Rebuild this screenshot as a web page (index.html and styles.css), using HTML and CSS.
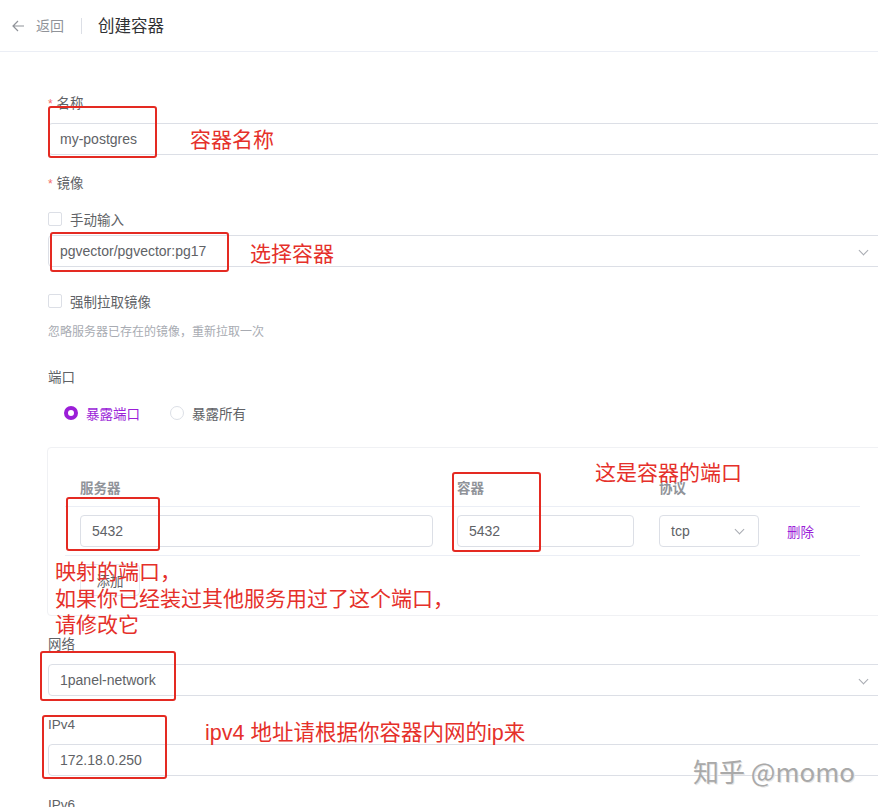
FILE: index.html
```html
<!DOCTYPE html>
<html lang="zh">
<head>
<meta charset="utf-8">
<title>创建容器</title>
<link rel="stylesheet" href="styles.css">
</head>
<body>
<div class="page">
  <header class="topbar">
    <span class="back-arrow">
      <svg width="13" height="12" viewBox="0 0 13 12"><path d="M12 6H1.5M6 1L1 6l5 5" fill="none" stroke="#909399" stroke-width="1.2"/></svg>
    </span>
    <span class="back-text">返回</span>
    <span class="divider"></span>
    <span class="title">创建容器</span>
  </header>

  <main class="form">
    <div class="item">
      <div class="label"><span class="req">*</span> 名称</div>
      <div class="input"><span>my-postgres</span></div>
    </div>

    <div class="item">
      <div class="label"><span class="req">*</span> 镜像</div>
      <div class="check-row"><span class="checkbox"></span><span>手动输入</span></div>
      <div class="input select"><span>pgvector/pgvector:pg17</span><span class="chev"></span></div>
      <div class="check-row mt18"><span class="checkbox"></span><span>强制拉取镜像</span></div>
      <div class="hint">忽略服务器已存在的镜像，重新拉取一次</div>
    </div>

    <div class="item">
      <div class="label">端口</div>
      <div class="radio-row">
        <span class="radio on"></span><span class="radio-text on">暴露端口</span>
        <span class="radio"></span><span class="radio-text">暴露所有</span>
      </div>
      <div class="card">
        <div class="table">
          <div class="tr th">
            <div class="c1">服务器</div>
            <div class="c2">容器</div>
            <div class="c3">协议</div>
            <div class="c4"></div>
          </div>
          <div class="tr td">
            <div class="c1"><div class="small-input">5432</div></div>
            <div class="c2"><div class="small-input">5432</div></div>
            <div class="c3"><div class="small-input proto">tcp<span class="chev"></span></div></div>
            <div class="c4"><span class="link">删除</span></div>
          </div>
        </div>
        <div class="add-btn">添加</div>
      </div>
    </div>

    <div class="item">
      <div class="label">网络</div>
      <div class="input select"><span>1panel-network</span><span class="chev"></span></div>
    </div>

    <div class="item">
      <div class="label">IPv4</div>
      <div class="input"><span>172.18.0.250</span></div>
    </div>

    <div class="item">
      <div class="label">IPv6</div>
    </div>
  </main>

  <div class="mark box1"></div>
  <div class="note n1">容器名称</div>
  <div class="mark box2"></div>
  <div class="note n2">选择容器</div>
  <div class="mark box3"></div>
  <div class="mark box4"></div>
  <div class="note n3">这是容器的端口</div>
  <div class="note n4">映射的端口，<br>如果你已经装过其他服务用过了这个端口，<br>请修改它</div>
  <div class="mark box5"></div>
  <div class="mark box6"></div>
  <div class="note n5">ipv4 地址请根据你容器内网的ip来</div>
  <div class="watermark">知乎 @momo</div>
</div>
</body>
</html>
```

FILE: styles.css
```css
* { box-sizing: border-box; }
html, body {
  margin: 0;
  padding: 0;
  background: #fff;
  overflow: hidden;
}
body {
  font-family: "Liberation Sans", "Noto Sans CJK SC", sans-serif;
  color: #606266;
  font-size: 14px;
}
.page {
  position: relative;
  width: 878px;
  height: 807px;
  overflow: hidden;
}

/* header */
.topbar {
  height: 52px;
  border-bottom: 1px solid #ebeef5;
  display: flex;
  align-items: center;
  padding-left: 12px;
}
.back-arrow { display: flex; align-items: center; width: 13px; height: 12px; }
.back-text { margin-left: 11px; color: #909399; font-size: 14px; line-height: 20px; }
.divider { width: 1px; height: 16px; background: #dcdfe6; margin: 0 16px 0 17px; }
.title { color: #303133; font-size: 16.5px; line-height: 22px; }

/* form */
.form {
  padding: 41px 0 0 48px;
  width: 960px;
}
.item { margin-bottom: 18px; }
.label {
  line-height: 22px;
  height: 22px;
  font-size: 13.5px;
  color: #606266;
  margin-bottom: 8px;
}
.req { color: #f56c6c; font-size: 12px; }
.input {
  height: 32px;
  width: 860px;
  border: 1px solid #dcdfe6;
  border-radius: 4px;
  display: flex;
  align-items: center;
  padding-left: 11px;
  font-size: 14px;
  color: #606266;
  position: relative;
}
.select .chev { position: absolute; left: 811px; top: 11px; }
.chev {
  display: inline-block;
  width: 7px;
  height: 7px;
  border-right: 1px solid #a8abb2;
  border-bottom: 1px solid #a8abb2;
  transform: rotate(45deg);
}

.check-row {
  height: 32px;
  display: flex;
  align-items: center;
  font-size: 13.5px;
  color: #606266;
}
.mt18 { margin-top: 18px; }
.checkbox {
  width: 14px;
  height: 14px;
  border: 1px solid #dcdfe6;
  border-radius: 2px;
  margin-right: 8px;
}
.hint {
  margin-top: 5px;
  line-height: 20px;
  font-size: 12px;
  color: #a8abb2;
  margin-bottom: 25px;
}

.radio-row {
  height: 32px;
  display: flex;
  align-items: center;
  padding-left: 16px;
  margin-top: 6px;
}
.radio {
  width: 14px;
  height: 14px;
  border-radius: 50%;
  border: 1px solid #dcdfe6;
  background: #fff;
}
.radio.on {
  border: 4.5px solid #9b1ed8;
  background: #fff;
}
.radio-text { margin: 0 30px 0 8px; font-size: 13.5px; color: #606266; }
.radio-text.on { color: #9b1ed8; }

.card {
  margin: 18px 0 0 -1px;
  width: 900px;
  border: 1px solid #f0f1f4;
  border-radius: 4px;
  padding: 19px 0 19px 17px;
}
.table { width: 795px; }
.tr { display: flex; align-items: center; }
.th {
  height: 40px;
  border-bottom: 1px solid #ebeef5;
  font-size: 13.5px;
  font-weight: bold;
  color: #909399;
}
.td {
  height: 49px;
  border-bottom: 1px solid #ebeef5;
}
.c1 { width: 377px; padding-left: 15px; }
.c2 { width: 202px; padding-left: 15px; }
.c3 { width: 128px; padding-left: 15px; }
.c4 { width: 88px; padding-left: 15px; }
.small-input {
  height: 32px;
  border: 1px solid #dcdfe6;
  border-radius: 4px;
  display: flex;
  align-items: center;
  padding-left: 11px;
  font-size: 14px;
  color: #606266;
}
.c1 .small-input { width: 353px; }
.c2 .small-input { width: 177px; }
.proto { width: 100px; justify-content: space-between; padding-right: 15px; }
.proto .chev { margin-top: -4px; }
.link { color: #9b1ed8; font-size: 13.5px; }
.add-btn {
  margin: 8px 0 0 15px;
  width: 60px;
  height: 32px;
  border: 1px solid #e4e7ed;
  border-radius: 4px;
  display: flex;
  align-items: center;
  justify-content: center;
  font-size: 13.5px;
  color: #606266;
}

/* annotations */
.mark {
  position: absolute;
  border: 2px solid #e42a22;
  border-radius: 3px;
}
.box1 { left: 48px; top: 106px; width: 109px; height: 52px; }
.box2 { left: 50px; top: 232px; width: 179px; height: 40px; }
.box3 { left: 66px; top: 497px; width: 94px; height: 54px; }
.box4 { left: 452px; top: 472px; width: 89px; height: 80px; }
.box5 { left: 40px; top: 651px; width: 136px; height: 50px; }
.box6 { left: 42px; top: 715px; width: 125px; height: 64px; }
.note {
  position: absolute;
  color: #e5302a;
  font-family: "Noto Sans CJK SC", "Liberation Sans", sans-serif;
  font-size: 21px;
  line-height: 26.5px;
  white-space: nowrap;
}
.n1 { left: 190px; top: 125px; }
.n2 { left: 250px; top: 239px; }
.n3 { left: 595px; top: 458px; }
.n4 { left: 55px; top: 557px; }
.n5 { left: 205px; top: 720px; font-size: 21.5px; font-family: "Liberation Sans", "Noto Sans CJK SC", sans-serif; }
.watermark {
  position: absolute;
  left: 693px;
  top: 755px;
  font-size: 26px;
  line-height: 32px;
  color: #a9a9a9;
  text-shadow: 1px 1px 0 #e6e6e6;
  font-family: "Noto Sans CJK SC", sans-serif;
  white-space: nowrap;
}
```
